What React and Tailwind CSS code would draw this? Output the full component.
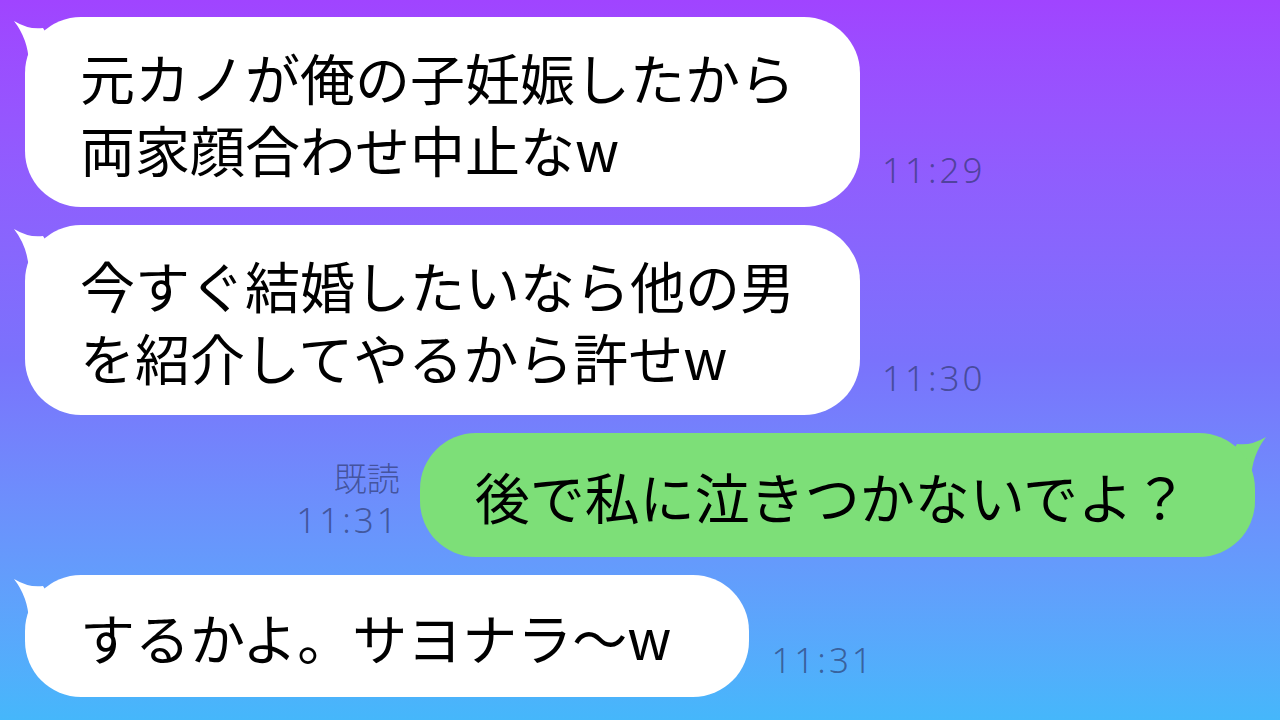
const JP = "font-['Noto_Sans_CJK_JP','Noto_Sans',sans-serif]";

// ── tail drawn at the bubble's top corner ─────────────────────────────────────
function Tail({ side, color }) {
  const pos = side === "left" ? "left-[-12px] top-[0px]" : "right-[-12px] top-[0px] -scale-x-100";
  return (
    <svg
      className={`absolute ${pos} w-[60px] h-[50px]`}
      viewBox="0 0 60 50"
      fill={color}
    >
      <path d="M1 4 Q16 13 30 11 L52 46 L16 46 Q15 22 1 4 Z" />
    </svg>
  );
}

function Time({ children }) {
  return (
    <div className="text-[35px] leading-none font-light tracking-[3px] text-[rgba(40,48,95,0.62)] font-['Noto_Sans',sans-serif]">
      {children}
    </div>
  );
}

function LeftMsg({ lines, time, pr = "pr-[65px]", py = "py-[23px]" }) {
  return (
    <div className="flex items-end gap-[22px]">
      <div className="relative">
        <Tail side="left" color="#ffffff" />
        <div className={`relative bg-white rounded-[56px] pl-[55px] ${pr} ${py} text-[55px] leading-[72px] text-black ${JP}`}>
          {lines.map((l) => (
            <div key={l} className="whitespace-nowrap">{l}</div>
          ))}
        </div>
      </div>
      <div className="pb-[20px]">
        <Time>{time}</Time>
      </div>
    </div>
  );
}

export default function App() {
  return (
    <div className="w-[1280px] h-[720px] overflow-hidden bg-gradient-to-b from-[#a044ff] via-[#7a72fc] to-[#45b7fb] px-[25px] pt-[17px] flex flex-col gap-[18px]">
      <LeftMsg lines={["元カノが俺の子妊娠したから", "両家顔合わせ中止なw"]} time="11:29" />
      <LeftMsg lines={["今すぐ結婚したいなら他の男", "を紹介してやるから許せw"]} time="11:30" />

      {/* sent message */}
      <div className="flex items-end justify-end gap-[20px]">
        <div className="pb-[20px] flex flex-col items-end gap-[8px]">
          <div className={`text-[33px] leading-none text-[rgba(40,48,95,0.62)] ${JP} font-light`}>既読</div>
          <Time>11:31</Time>
        </div>
        <div className="relative">
          <Tail side="right" color="#7ddf78" />
          <div className={`relative bg-[#7ddf78] rounded-[56px] pl-[55px] pr-[67px] py-[26px] text-[55px] leading-[72px] text-black whitespace-nowrap ${JP}`}>
            後で私に泣きつかないでよ？
          </div>
        </div>
      </div>

      <LeftMsg lines={["するかよ。サヨナラ〜w"]} time="11:31" pr="pr-[78px]" py="py-[25px]" />
    </div>
  );
}
